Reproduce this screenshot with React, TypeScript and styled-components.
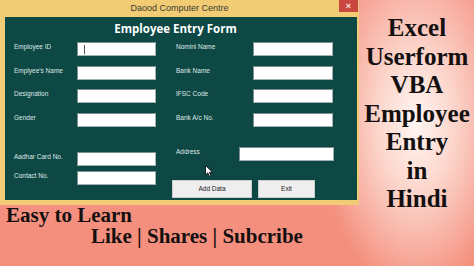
import React from "react";
import styled, { createGlobalStyle } from "styled-components";

const Global = createGlobalStyle`
  html, body { margin: 0; padding: 0; }
  body {
    width: 474px;
    height: 266px;
    overflow: hidden;
    font-family: "Liberation Sans", Arial, sans-serif;
  }
`;

const Page = styled.div`
  width: 474px;
  height: 266px;
  display: grid;
  grid-template-columns: 360px 1fr;
  background:
    radial-gradient(ellipse 95px 175px at 416px 122px, #fff6f3 0%, #fcd6cc 40%, rgba(246, 150, 132, 0) 100%),
    linear-gradient(180deg, #f6988a 0%, #f48e7c 100%);
`;

const LeftCol = styled.div`
  display: flex;
  flex-direction: column;
`;

const Window = styled.div`
  width: 352px;
  height: 200px;
  flex: none;
  background: #f1cc74;
  border-left: 5px solid #f1cc74;
  border-right: 2px solid #f1cc74;
  border-bottom: 5px solid #f1cc74;
  display: flex;
  flex-direction: column;
`;

const TitleBar = styled.div`
  height: 17px;
  flex: none;
  margin-left: -5px;
  margin-right: -2px;
  display: grid;
  grid-template-columns: 1fr auto 1fr;
  align-items: start;
`;

const TitleText = styled.div`
  grid-column: 2;
  font-size: 9px;
  line-height: 17px;
  color: #3b3a36;
`;

const CloseBtn = styled.div`
  grid-column: 3;
  justify-self: end;
  margin-right: 1px;
  width: 19px;
  height: 12px;
  background: #c9473f;
  color: #fbe4e0;
  font-size: 9px;
  line-height: 12px;
  text-align: center;
  font-weight: bold;
`;

const Panel = styled.div`
  position: relative;
  flex: 1;
  background: #0e4845;
  padding-left: 9px;
  display: flex;
  flex-direction: column;
`;

const FormTitle = styled.div`
  height: 25px;
  box-sizing: border-box;
  padding-top: 5px;
  padding-right: 20px;
  text-align: center;
  font-family: "Open Sans", "Liberation Sans", sans-serif;
  font-weight: 700;
  font-size: 11.5px;
  line-height: 14px;
  color: #ffffff;
`;

const Columns = styled.div`
  display: flex;
  gap: 20px;
`;

const Column = styled.div<{ $w: number }>`
  width: ${(p) => p.$w}px;
  display: flex;
  flex-direction: column;
`;

const Row = styled.div<{ $mt: number }>`
  display: flex;
  align-items: flex-start;
  height: 14px;
  margin-top: ${(p) => p.$mt}px;
`;

const Label = styled.div<{ $w: number }>`
  width: ${(p) => p.$w}px;
  flex: none;
  font-size: 6.5px;
  line-height: 8px;
  padding-top: 1px;
  color: #dfe9e6;
  white-space: nowrap;
`;

const TextBox = styled.div<{ $w: number }>`
  position: relative;
  width: ${(p) => p.$w}px;
  height: 14px;
  box-sizing: border-box;
  background: #ffffff;
  border: 1px solid #9fb3b0;
  border-top-color: #7d8f8c;
  border-left-color: #7d8f8c;
`;

const Caret = styled.span`
  position: absolute;
  left: 6px;
  top: 2px;
  width: 1px;
  height: 9px;
  background: #555;
`;

const ButtonRow = styled.div`
  display: flex;
  gap: 6px;
  margin-top: 19px;
  margin-left: -4px;
`;

const Button = styled.div<{ $w: number }>`
  width: ${(p) => p.$w}px;
  height: 18px;
  box-sizing: border-box;
  background: #eeeeee;
  border: 1px solid #c8cfce;
  font-size: 6.5px;
  line-height: 16px;
  text-align: center;
  color: #222;
`;

const Pointer = styled.svg`
  position: absolute;
  left: 200px;
  top: 148px;
`;

const Bottom = styled.div`
  font-family: "Liberation Serif", "Times New Roman", serif;
  font-weight: 700;
  font-size: 21px;
  line-height: 21px;
  color: #141010;
`;

const BottomLine = styled.div<{ $indent: number }>`
  padding-left: ${(p) => p.$indent}px;
  white-space: nowrap;
`;

const RightCol = styled.div`
  padding-top: 14px;
  display: flex;
  flex-direction: column;
  align-items: center;
  font-family: "Liberation Serif", "Times New Roman", serif;
  font-weight: 700;
  font-size: 25px;
  line-height: 28.5px;
  color: #141010;
`;

const leftFields = [
  { label: "Employee ID", mt: 0, caret: true },
  { label: "Emplyee's Name", mt: 10 },
  { label: "Designation", mt: 9 },
  { label: "Gender", mt: 10 },
  { label: "Aadhar Card No.", mt: 25 },
  { label: "Contact No.", mt: 5 },
];

const rightFields = [
  { label: "Nomini Name", mt: 0 },
  { label: "Bank Name", mt: 10 },
  { label: "IFSC Code", mt: 9 },
  { label: "Bank A/c No.", mt: 10 },
];

const sideLines = ["Excel", "Userform", "VBA", "Employee", "Entry", "in", "Hindi"];

export default function App() {
  return (
    <>
      <Global />
      <Page>
        <LeftCol>
          <Window>
            <TitleBar>
              <TitleText>Daood Computer Centre</TitleText>
              <CloseBtn>×</CloseBtn>
            </TitleBar>
            <Panel>
              <FormTitle>Employee Entry Form</FormTitle>
              <Columns>
                <Column $w={142}>
                  {leftFields.map((f) => (
                    <Row key={f.label} $mt={f.mt}>
                      <Label $w={63}>{f.label}</Label>
                      <TextBox $w={79}>{f.caret && <Caret />}</TextBox>
                    </Row>
                  ))}
                </Column>
                <Column $w={158}>
                  {rightFields.map((f) => (
                    <Row key={f.label} $mt={f.mt}>
                      <Label $w={77}>{f.label}</Label>
                      <TextBox $w={80} />
                    </Row>
                  ))}
                  <Row $mt={20}>
                    <Label $w={63}>Address</Label>
                    <TextBox $w={95} />
                  </Row>
                  <ButtonRow>
                    <Button $w={80}>Add Data</Button>
                    <Button $w={57}>Exit</Button>
                  </ButtonRow>
                </Column>
              </Columns>
              <Pointer width="9" height="12" viewBox="0 0 9 12">
                <path d="M0.5 0.5 L0.5 10 L2.8 7.8 L4.4 11.3 L5.9 10.6 L4.4 7.3 L7.6 7.3 Z" fill="#ffffff" stroke="#111" strokeWidth="0.9" strokeLinejoin="round" />
              </Pointer>
            </Panel>
          </Window>
          <Bottom>
            <BottomLine $indent={6}>Easy to Learn</BottomLine>
            <BottomLine $indent={91}>Like | Shares | Subcribe</BottomLine>
          </Bottom>
        </LeftCol>
        <RightCol>
          {sideLines.map((l) => (
            <div key={l}>{l}</div>
          ))}
        </RightCol>
      </Page>
    </>
  );
}
